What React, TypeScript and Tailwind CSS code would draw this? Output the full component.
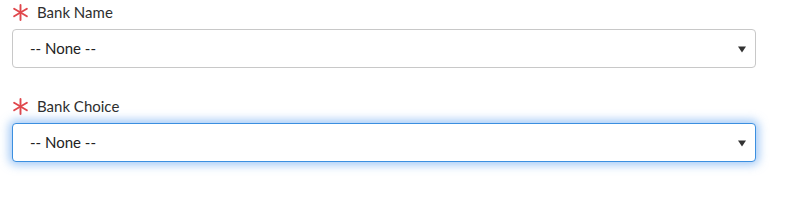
import React from "react";

function Asterisk() {
  return (
    <svg width="17" height="17" viewBox="0 0 16 16" className="shrink-0">
      <g stroke="#e0474c" strokeWidth="1.8" strokeLinecap="round">
        <line x1="8" y1="1" x2="8" y2="15" />
        <line x1="2" y1="4.5" x2="14" y2="11.5" />
        <line x1="2" y1="11.5" x2="14" y2="4.5" />
      </g>
    </svg>
  );
}

function Field({ label, focused }: { label: string; focused?: boolean }) {
  return (
    <div className="flex flex-col">
      <div className="flex items-center gap-[8px] h-[24px] text-[15px] text-[#2e2e2e]">
        <Asterisk />
        <span>{label}</span>
      </div>
      <div
        className={
          "mt-[5px] h-[39px] w-[744px] rounded-[4px] bg-white flex items-center justify-between pl-[17px] pr-[9px] text-[15px] text-[#222] " +
          (focused
            ? "border border-[#3b8fe0] shadow-[0_0_10px_3px_rgba(100,165,240,0.6)]"
            : "border border-[#c8c8c8]")
        }
      >
        <span>-- None --</span>
        <svg width="8" height="8" viewBox="0 0 8 8">
          <polygon points="0,1.5 8,1.5 4,7.5" fill="#333" />
        </svg>
      </div>
    </div>
  );
}

export default function App() {
  return (
    <div
      className="w-[795px] h-[213px] bg-white pl-[12px] flex flex-col gap-[26px]"
      style={{ fontFamily: "Lato, 'Open Sans', sans-serif" }}
    >
      <Field label="Bank Name" />
      <Field label="Bank Choice" focused />
    </div>
  );
}
